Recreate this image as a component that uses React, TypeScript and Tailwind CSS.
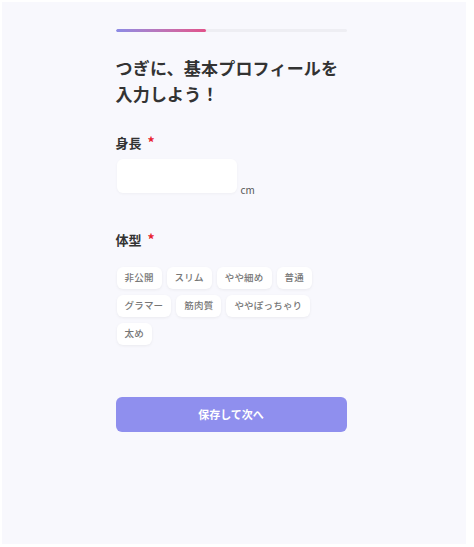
import { useState } from 'react';

const BODY_TYPES = ['非公開', 'スリム', 'やや細め', '普通', 'グラマー', '筋肉質', 'ややぽっちゃり', '太め'];

function Label({ text }: { text: string }) {
  return (
    <div className="flex items-center gap-[6px] text-[13px] font-bold text-[#333] leading-none">
      <span>{text}</span>
      <span className="text-[#e8202e] text-[14px]">*</span>
    </div>
  );
}

export default function App() {
  const [height, setHeight] = useState('');
  const [bodyType, setBodyType] = useState<string | null>(null);

  return (
    <div
      className="h-[547px] w-[474px] bg-white p-[2px] pr-[8px] pb-[3px]"
      style={{ fontFamily: '"Noto Sans CJK JP", "Noto Sans", sans-serif' }}
    >
      <div className="h-full bg-[#f8f8fd] flex justify-center">
        <div className="w-[231px] pt-[27px] ml-[-6px]">
          {/* progress */}
          <div className="h-[3px] w-full rounded-full bg-[#eeeef3] overflow-hidden">
            <div className="h-full w-[39%] rounded-full bg-gradient-to-r from-[#8b8be6] to-[#e2508a]" />
          </div>

          <h1 className="mt-[23px] text-[17px] font-bold leading-[26px] text-[#333] tracking-[0.2px]">
            つぎに、基本プロフィールを
            <br />
            入力しよう！
          </h1>

          {/* height */}
          <div className="mt-[28px]">
            <Label text="身長" />
            <div className="mt-[10px] flex items-end gap-[4px]">
              <input
                value={height}
                onChange={(e) => setHeight(e.target.value)}
                className="h-[34px] w-[120px] ml-[1px] rounded-[6px] bg-white shadow-[0_1px_3px_rgba(0,0,0,0.04)] outline-none px-2 text-sm"
              />
              <span className="text-[10px] text-[#555] leading-none mb-[-2px]">cm</span>
            </div>
          </div>

          {/* body type */}
          <div className="mt-[39px]">
            <Label text="体型" />
            <div className="mt-[21px] flex flex-wrap gap-x-[5px] gap-y-[6px] w-[215px] ml-[1px]">
              {BODY_TYPES.map((t) => (
                <button
                  key={t}
                  onClick={() => setBodyType(t)}
                  className={
                    'h-[22px] px-[8px] rounded-[6px] text-[9.5px] font-medium leading-none tracking-[0.2px] shadow-[0_1px_3px_rgba(0,0,0,0.06)] ' +
                    (bodyType === t ? 'bg-[#8f8fef] text-white' : 'bg-white text-[#777]')
                  }
                >
                  {t}
                </button>
              ))}
            </div>
          </div>

          <button className="mt-[52px] h-[35px] w-full rounded-[6px] bg-[#8f8fee] text-white text-[11px] font-bold">
            保存して次へ
          </button>
        </div>
      </div>
    </div>
  );
}
